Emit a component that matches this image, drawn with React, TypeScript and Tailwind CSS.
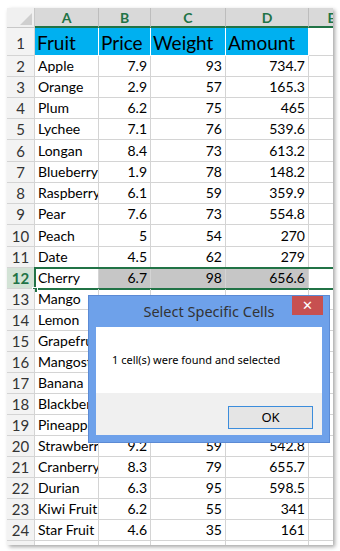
import React from "react";

const W = ["w-[64px]", "w-[52px]", "w-[75px]", "w-[83px]", "w-[46px]"];

// rows 13-19 sit behind the dialog, only their fruit names show
const data: string[][] = [
  ["Apple", "7.9", "93", "734.7"],
  ["Orange", "2.9", "57", "165.3"],
  ["Plum", "6.2", "75", "465"],
  ["Lychee", "7.1", "76", "539.6"],
  ["Longan", "8.4", "73", "613.2"],
  ["Blueberry", "1.9", "78", "148.2"],
  ["Raspberry", "6.1", "59", "359.9"],
  ["Pear", "7.6", "73", "554.8"],
  ["Peach", "5", "54", "270"],
  ["Date", "4.5", "62", "279"],
  ["Cherry", "6.7", "98", "656.6"],
  ["Mango"],
  ["Lemon"],
  ["Grapefruit"],
  ["Mangosteen"],
  ["Banana"],
  ["Blackberry"],
  ["Pineapple"],
  ["Strawberry", "9.2", "59", "542.8"],
  ["Cranberry", "8.3", "79", "655.7"],
  ["Durian", "6.3", "95", "598.5"],
  ["Kiwi Fruit", "6.2", "55", "341"],
  ["Star Fruit", "4.6", "35", "161"],
];

const font = { fontFamily: "Lato, 'Open Sans', sans-serif" };

function Row({ n, vals, sel }: { n: number; vals: string[]; sel?: boolean }) {
  // a couple of rows are one pixel taller, as in the scaled screenshot
  const tall = n === 6 || n === 10;
  return (
    <div className={`relative flex shrink-0 ${tall ? "h-[22px]" : "h-[21px]"}`}>
      <div
        className={`w-[28px] shrink-0 border-r border-b border-[#d4d4d4] flex items-end justify-center text-[15px] leading-[20px] ${
          sel ? "bg-[#d3e3d6] text-[#217346] font-bold" : "bg-[#f3f3f3] text-[#333]"
        }`}
      >
        {n}
      </div>
      {[0, 1, 2, 3, 4].map((i) => (
        <div
          key={i}
          className={`${W[i]} shrink-0 border-r border-b border-[#d4d4d4] px-[3px] flex items-end overflow-hidden whitespace-nowrap text-[14px] leading-[20px] text-black ${
            i > 0 && i < 4 ? "justify-end" : ""
          } ${sel && i > 0 && i < 4 ? "bg-[#c6c6c6]" : ""}`}
        >
          {vals[i] ?? ""}
        </div>
      ))}
      {sel && (
        <>
          <div className="absolute left-[27px] top-[-1px] h-[23px] right-[-20px] border-2 border-[#217346]" />
          <div className="absolute left-[25px] bottom-[-4px] w-[6px] h-[6px] bg-[#217346] border border-white" />
        </>
      )}
    </div>
  );
}

export default function App() {
  return (
    <div className="relative w-[340px] h-[551px] bg-white" style={font}>
      <div className="absolute left-[7px] top-[8px] w-[326px] h-[537px] overflow-hidden bg-white shadow-[2px_2px_4px_rgba(0,0,0,0.35)]">
        <div className="flex flex-col">
          {/* column headers */}
          <div className="flex h-[20px] shrink-0">
            <div className="relative w-[28px] shrink-0 bg-[#f0f0f0] border-r border-b border-[#c8c8c8]">
              <svg className="absolute left-[13px] top-[5px]" width="12" height="12" viewBox="0 0 12 12">
                <polygon points="12,0 12,12 0,12" fill="#cfcfcf" />
              </svg>
            </div>
            {["A", "B", "C", "D", "E"].map((c, i) => (
              <div
                key={c}
                className={`${W[i]} shrink-0 bg-[#d9d9d9] border-r border-[#bdbdbd] border-b-2 border-b-[#217346] flex items-center justify-center text-[14px] font-bold text-[#217346]`}
              >
                {c}
              </div>
            ))}
          </div>
          {/* row 1 */}
          <div className="flex h-[28px] shrink-0">
            <div className="w-[28px] shrink-0 bg-[#f3f3f3] border-r border-b border-[#d4d4d4] flex items-end justify-center text-[15px] leading-[24px] text-[#333]">
              1
            </div>
            {["Fruit", "Price", "Weight", "Amount"].map((t, i) => (
              <div
                key={t}
                className={`${W[i]} shrink-0 bg-[#00b0f0] border-r border-b border-white px-[2px] flex items-end text-[19px] leading-[25px] text-black whitespace-nowrap`}
              >
                {t}
              </div>
            ))}
            <div className="w-[46px] shrink-0 border-r border-b border-[#d4d4d4]" />
          </div>
          {data.map((d, i) => (
            <Row key={i} n={i + 2} vals={d} sel={i + 2 === 12} />
          ))}
          <Row n={25} vals={[]} />
        </div>
      </div>

      {/* dialog */}
      <div
        className="absolute left-[88px] top-[295px] w-[242px] h-[148px] bg-[#6ea1ea] border border-[#5b8ad4] flex flex-col px-[7px] pb-[7px]"
        style={{ fontFamily: "'Noto Sans', 'Open Sans', sans-serif" }}
      >
        <div className="relative h-[31px] shrink-0 flex items-center justify-center text-[14.5px] text-[#333]">
          Select Specific Cells
          <div className="absolute top-0 right-[-1px] w-[31px] h-[19px] bg-[#c75050] flex items-center justify-center text-white text-[13px] leading-none">
            ✕
          </div>
        </div>
        <div className="h-[66px] shrink-0 bg-white flex items-center pl-[16px] text-[11px] text-black">
          1 cell(s) were found and selected
        </div>
        <div className="flex-1 bg-[#f0f0f0] flex justify-end items-start pt-[13px] pr-[9px]">
          <div className="w-[85px] h-[23px] border border-[#3c8ddc] bg-[#e5e5e5] flex items-center justify-center text-[13px] text-black">
            OK
          </div>
        </div>
      </div>
    </div>
  );
}
